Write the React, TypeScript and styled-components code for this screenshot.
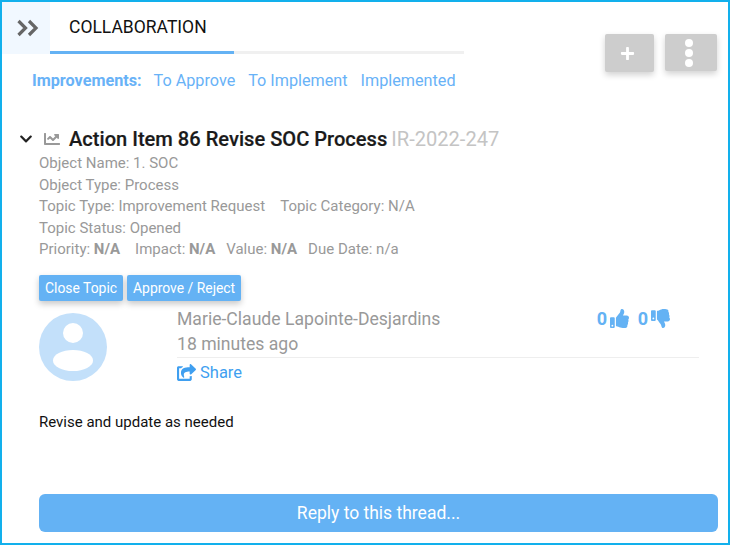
import { createGlobalStyle, styled } from "styled-components";
import {
  FaChartLine,
  FaChevronDown,
  FaPlus,
  FaShareSquare,
  FaThumbsDown,
  FaThumbsUp,
} from "react-icons/fa";

const GlobalStyle = createGlobalStyle`
  html, body {
    margin: 0;
    padding: 0;
    background: #fff;
    font-family: Roboto, "Liberation Sans", sans-serif;
  }
  * { box-sizing: border-box; }
`;

const Frame = styled.div`
  position: relative;
  width: 730px;
  height: 545px;
  border: 2px solid #12b0ec;
  display: flex;
  flex-direction: column;
  background: #fff;
`;

const TabBar = styled.div`
  display: flex;
  width: 462px;
  height: 52px;
  flex: none;
`;

const Toggle = styled.div`
  width: 48px;
  height: 52px;
  background: #f1f8ff;
  display: flex;
  align-items: center;
  justify-content: center;
  padding: 0 0 1px 3px;
`;

const TabStrip = styled.div`
  flex: 1;
  display: flex;
  border-bottom: 3px solid #f0f0f0;
`;

const Tab = styled.div`
  width: 184px;
  height: 52px;
  margin-bottom: -3px;
  border-bottom: 3px solid #64b2f4;
  padding: 15px 0 0 19px;
  font-size: 17.5px;
  line-height: 20px;
  color: #111;
`;

const FloatingButtons = styled.div`
  position: absolute;
  top: 32px;
  left: 603px;
  display: flex;
  gap: 11px;
`;

const FloatingButton = styled.div<{ $wide?: boolean }>`
  width: ${(p) => (p.$wide ? 52 : 49)}px;
  height: ${(p) => (p.$wide ? 37 : 38)}px;
  border-radius: 2px;
  background: #cdcdcd;
  color: #fff;
  display: flex;
  align-items: center;
  justify-content: center;
  padding-right: ${(p) => (p.$wide ? 5 : 4)}px;
  box-shadow: 0 3px 6px rgba(0, 0, 0, 0.18);
`;

const FilterRow = styled.div`
  display: flex;
  gap: 13px;
  padding: 18px 0 0 30px;
  font-size: 16.2px;
  line-height: 18px;
  color: #68b2f7;
  flex: none;
`;

const FilterLabel = styled.span`
  font-weight: 700;
  margin-right: -1px;
`;

const Topic = styled.div`
  padding: 37px 0 0 17px;
  flex: none;
`;

const TitleRow = styled.div`
  display: flex;
  align-items: center;
  height: 24px;
`;

const Chevron = styled.span`
  display: flex;
  width: 25px;
  color: #222;
`;

const ChartIcon = styled.span`
  display: flex;
  width: 25px;
  color: #999;
`;

const Title = styled.h2`
  margin: 0;
  font-size: 20.1px;
  font-weight: 500;
  line-height: 24px;
  color: #1a1a1a;
  -webkit-text-stroke: 0.2px #1a1a1a;
`;

const Code = styled.span`
  margin-left: 4px;
  font-size: 20.1px;
  line-height: 24px;
  color: #c4c4c4;
`;

const Details = styled.div`
  padding: 2px 0 0 20px;
  font-size: 15px;
  line-height: 21.5px;
  color: #999;
`;

const DetailLine = styled.div<{ $gap?: number }>`
  display: flex;
  gap: ${(p) => p.$gap ?? 15}px;
  height: 21.5px;
  b {
    font-weight: 700;
  }
`;

const Priority = styled.span`
  margin-right: 4px;
`;

const Actions = styled.div`
  display: flex;
  gap: 4px;
  padding: 14px 0 0 20px;
`;

const ActionButton = styled.div`
  height: 26px;
  padding: 0 6px;
  background: #64b2f4;
  border-radius: 2px;
  color: #fff;
  font-size: 13.9px;
  line-height: 26px;
  box-shadow: 0 3px 6px rgba(0, 0, 0, 0.22);
`;

const Comment = styled.div`
  display: flex;
  padding: 12px 0 0 37px;
  flex: none;
`;

const Avatar = styled.svg`
  width: 68px;
  height: 68px;
  flex: none;
`;

const CommentBody = styled.div`
  margin-left: 70px;
  width: 522px;
  margin-top: -6px;
`;

const CommentHead = styled.div`
  display: flex;
  justify-content: space-between;
  border-bottom: 1px solid #eee;
  height: 51px;
`;

const Author = styled.div`
  font-size: 17.6px;
  line-height: 25px;
  color: #999;
`;

const Votes = styled.div`
  display: flex;
  gap: 8.5px;
  padding: 0 29px 0 0;
  height: 24px;
  color: #64b2f4;
  font-size: 18px;
  font-weight: 700;
  align-items: center;
`;

const Vote = styled.span`
  display: flex;
  align-items: center;
  gap: 3px;
`;

const Share = styled.div`
  display: flex;
  align-items: center;
  gap: 4px;
  margin-top: 5px;
  font-size: 16.5px;
  line-height: 20px;
  color: #3f9ff0;
`;

const Message = styled.p`
  margin: 0;
  padding: 29px 0 0 37px;
  font-size: 15px;
  line-height: 20px;
  color: #111;
  flex: none;
`;

const Reply = styled.div`
  margin: auto 10px 11px 37px;
  height: 38px;
  border-radius: 6px;
  background: #64b2f4;
  color: #fff;
  font-size: 17.5px;
  line-height: 38px;
  text-align: center;
  flex: none;
`;

export default function App() {
  return (
    <>
      <GlobalStyle />
      <Frame>
        <TabBar>
          <Toggle>
            <svg width="22" height="18" viewBox="0 0 22 18" fill="none" stroke="#666" strokeWidth="3.2">
              <path d="M1.5 2l7 7-7 7M12 2l7 7-7 7" />
            </svg>
          </Toggle>
          <TabStrip>
            <Tab>COLLABORATION</Tab>
          </TabStrip>
        </TabBar>
        <FloatingButtons>
          <FloatingButton>
            <FaPlus size={15} />
          </FloatingButton>
          <FloatingButton $wide>
            <svg width="8" height="28" viewBox="0 0 8 28" fill="#fff">
              <circle cx="4" cy="4" r="4" />
              <circle cx="4" cy="14" r="4" />
              <circle cx="4" cy="24" r="4" />
            </svg>
          </FloatingButton>
        </FloatingButtons>
        <FilterRow>
          <FilterLabel>Improvements:</FilterLabel>
          <span>To Approve</span>
          <span>To Implement</span>
          <span>Implemented</span>
        </FilterRow>
        <Topic>
          <TitleRow>
            <Chevron>
              <FaChevronDown size={14} />
            </Chevron>
            <ChartIcon>
              <FaChartLine size={16} />
            </ChartIcon>
            <Title>Action Item 86 Revise SOC Process</Title>
            <Code>IR-2022-247</Code>
          </TitleRow>
          <Details>
            <DetailLine>Object Name: 1. SOC</DetailLine>
            <DetailLine>Object Type: Process</DetailLine>
            <DetailLine>
              <span>Topic Type: Improvement Request</span>
              <span>Topic Category: N/A</span>
            </DetailLine>
            <DetailLine>Topic Status: Opened</DetailLine>
            <DetailLine $gap={11}>
              <Priority>
                Priority: <b>N/A</b>
              </Priority>
              <span>
                Impact: <b>N/A</b>
              </span>
              <span>
                Value: <b>N/A</b>
              </span>
              <span>Due Date: n/a</span>
            </DetailLine>
          </Details>
          <Actions>
            <ActionButton>Close Topic</ActionButton>
            <ActionButton>Approve / Reject</ActionButton>
          </Actions>
        </Topic>
        <Comment>
          <Avatar viewBox="0 0 68 68">
            <circle cx="34" cy="34" r="34" fill="#c3e0fa" />
            <circle cx="34" cy="20" r="10" fill="#fff" />
            <ellipse cx="34" cy="47.5" rx="20" ry="10.5" fill="#fff" />
          </Avatar>
          <CommentBody>
            <CommentHead>
              <Author>
                Marie-Claude Lapointe-Desjardins
                <br />
                18 minutes ago
              </Author>
              <Votes>
                <Vote>
                  0 <FaThumbsUp size={19} />
                </Vote>
                <Vote>
                  0 <FaThumbsDown size={19} />
                </Vote>
              </Votes>
            </CommentHead>
            <Share>
              <FaShareSquare size={19} />
              Share
            </Share>
          </CommentBody>
        </Comment>
        <Message>Revise and update as needed</Message>
        <Reply>Reply to this thread...</Reply>
      </Frame>
    </>
  );
}
